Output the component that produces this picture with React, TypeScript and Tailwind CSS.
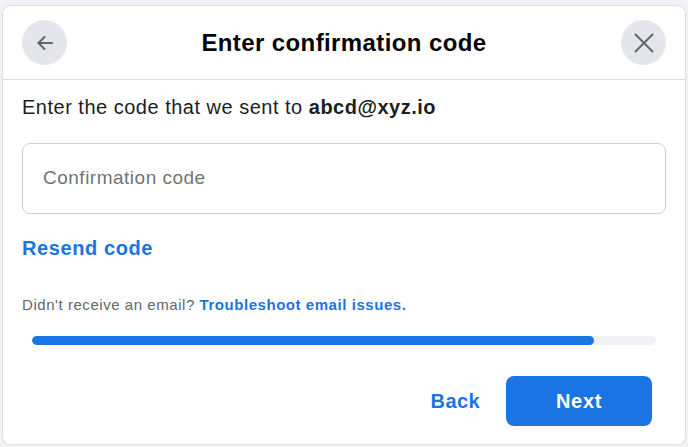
const BackArrow = () => (
    <svg width="20" height="20" viewBox="0 0 20 20" fill="none" stroke="#606770" strokeWidth="2" strokeLinecap="round" strokeLinejoin="round">
        <path d="M17 10H3.5" />
        <path d="M9.5 4L3.5 10L9.5 16" />
    </svg>
);

const CloseIcon = () => (
    <svg width="20" height="20" viewBox="0 0 20 20" fill="none" stroke="#606770" strokeWidth="2" strokeLinecap="round">
        <path d="M1.5 1.5L18.5 18.5" />
        <path d="M18.5 1.5L1.5 18.5" />
    </svg>
);

const App = () => {
    const progress = 90;

    return (
        <div className="w-[688px] h-[447px] bg-[#f0f2f5] pt-[5px] px-[2px] font-['Liberation_Sans',Arial,sans-serif] text-[#1c1e21]">
            <div className="h-[440px] bg-white rounded-lg border border-[#dddfe2] flex flex-col">
                <div className="h-[74px] flex items-center justify-between px-[19px] border-b border-[#dadde1] shrink-0">
                    <button className="w-[45px] h-[45px] rounded-full bg-[#e4e6eb] flex items-center justify-center">
                        <BackArrow />
                    </button>
                    <h1 className="text-[24px] tracking-[0.4px] font-bold leading-none text-[#050505]">Enter confirmation code</h1>
                    <button className="w-[45px] h-[45px] rounded-full bg-[#e4e6eb] flex items-center justify-center">
                        <CloseIcon />
                    </button>
                </div>
                <div className="px-[19px] flex flex-col">
                    <p className="mt-[16px] text-[20px] tracking-[0.5px] leading-[23px]">
                        Enter the code that we sent to <span className="font-bold">abcd@xyz.io</span>
                    </p>
                    <div className="mt-[24px] h-[71px] rounded-lg border border-[#ccd0d5] flex items-center px-5">
                        <input
                            type="text"
                            placeholder="Confirmation code"
                            className="w-full outline-none text-[19px] tracking-[0.5px] placeholder:text-[#737373]"
                        />
                    </div>
                    <a className="mt-[24px] text-[20px] tracking-[0.6px] leading-[21px] font-bold text-[#1b74e4]">Resend code</a>
                    <p className="mt-[37px] text-[15px] tracking-[0.55px] leading-[18px] text-[#606770]">
                        Didn't receive an email? <span className="font-bold text-[#1b74e4]">Troubleshoot email issues.</span>
                    </p>
                    <div className="mt-[22px] mx-[10px] h-[9px] rounded-full bg-[#f0f2f5] overflow-hidden">
                        <div className="h-full rounded-full bg-[#1b74e4]" style={{ width: `${progress}%` }} />
                    </div>
                    <div className="mt-[31px] flex justify-end items-center gap-[14px] pr-[14px]">
                        <button className="h-[50px] px-3 text-[20px] tracking-[0.4px] font-bold text-[#1b74e4]">Back</button>
                        <button className="h-[50px] w-[146px] rounded-lg bg-[#1b74e4] text-white text-[20px] tracking-[0.7px] font-bold">Next</button>
                    </div>
                </div>
            </div>
        </div>
    );
};

export default App;
